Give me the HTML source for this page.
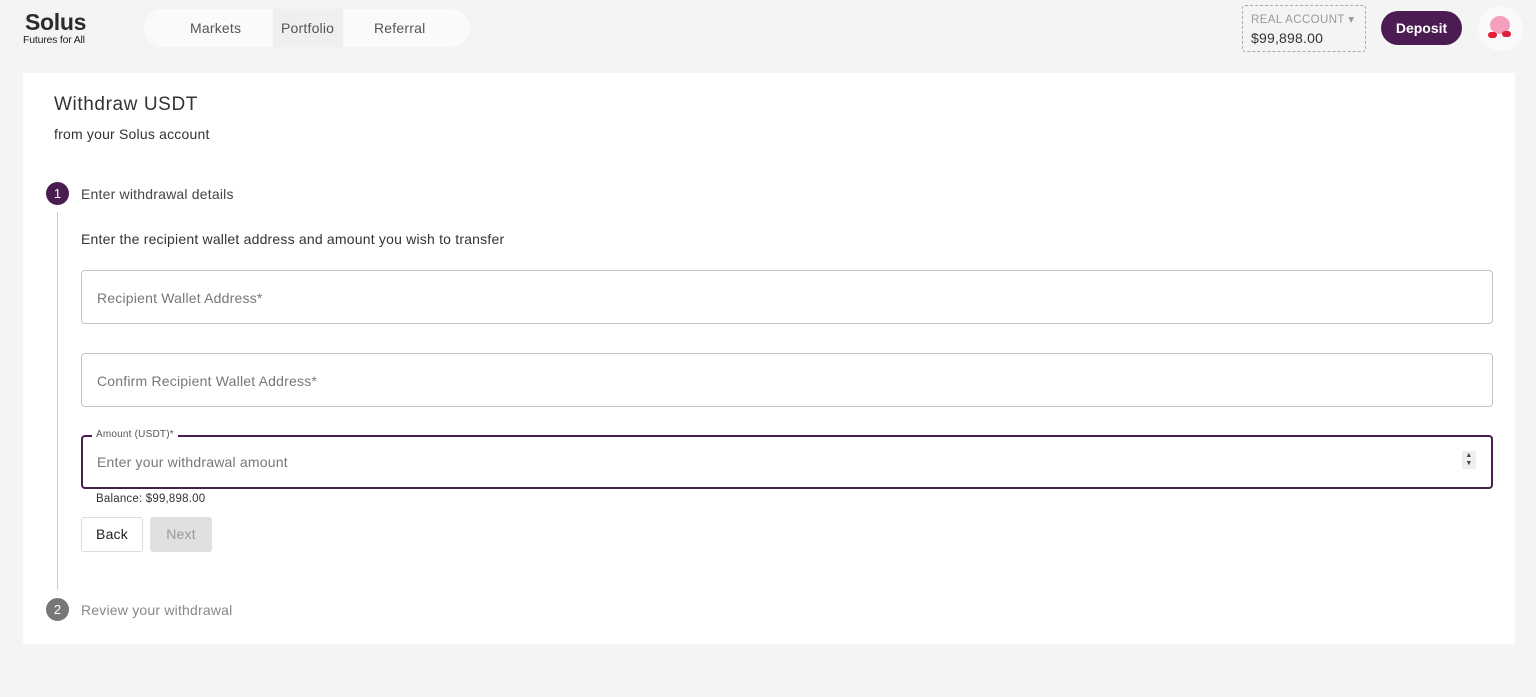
<!DOCTYPE html>
<html><head><style>
*{box-sizing:border-box;margin:0;padding:0}
body{width:1536px;height:697px;background:#f4f4f4;font-family:"Liberation Sans",sans-serif;color:#333;position:relative;overflow:hidden;letter-spacing:0.2px}
.abs{position:absolute}
.logo{left:25px;top:9px;font-size:23px;font-weight:bold;color:#2b2b2b;letter-spacing:-0.3px}
.tag{left:23px;top:34px;font-size:10.5px;color:#222;letter-spacing:-0.2px}
.nav{left:144px;top:9px;width:326px;height:38px;background:#fafafa;border-radius:19px}
.nav span{position:absolute;top:11px;font-size:14px;color:#555}
.acct{left:1242px;top:5px;width:124px;height:47px;border:1px dashed #aaa;border-radius:3px}
.dep{left:1381px;top:11px;width:81px;height:34px;background:#4a1c52;border-radius:17px;color:#fff;font-weight:bold;font-size:14px;text-align:center;line-height:34px;letter-spacing:0}
.av{left:1478px;top:6px;width:45px;height:45px;border-radius:50%;background:#fafafa}
.card{left:23px;top:73px;width:1492px;height:571px;background:#fff}
.inp{left:81px;width:1412px;height:54px;border:1px solid #c4c4c4;border-radius:4px;font-size:14px;color:#777;padding:19px 0 0 15px}
.circ{width:23px;height:23px;border-radius:50%;color:#fff;font-size:13px;text-align:center;line-height:23px;letter-spacing:0}
</style></head><body>
<div class="abs logo">Solus</div>
<div class="abs tag">Futures for All</div>
<div class="abs nav">
<span style="left:46px">Markets</span>
<div class="abs" style="left:129px;top:0;width:70px;height:38px;background:#efefef"></div>
<span style="left:137px">Portfolio</span>
<span style="left:230px">Referral</span>
</div>
<div class="abs acct"><div class="abs" style="left:8px;top:6px;font-size:11.5px;color:#999;letter-spacing:0.4px">REAL ACCOUNT ▾</div><div class="abs" style="left:8px;top:24px;font-size:14px;color:#333">$99,898.00</div></div>
<div class="abs dep">Deposit</div>
<div class="abs av"><div class="abs" style="left:12px;top:10px;width:20px;height:18px;border-radius:50%;background:#f4a0bd"></div><div class="abs" style="left:10px;top:26px;width:9px;height:6px;background:#e0203a;border-radius:3px"></div><div class="abs" style="left:24px;top:25px;width:9px;height:6px;background:#e0203a;border-radius:3px"></div></div>
<div class="abs card"></div>
<div class="abs" style="left:54px;top:94px;font-size:19px;color:#333;letter-spacing:0.6px">Withdraw USDT</div>
<div class="abs" style="left:54px;top:126px;font-size:14px;color:#333">from your Solus account</div>
<div class="abs circ" style="left:46px;top:182px;background:#4a1c52">1</div>
<div class="abs" style="left:81px;top:186px;font-size:14px;color:#444">Enter withdrawal details</div>
<div class="abs" style="left:57px;top:212px;width:1px;height:378px;background:#ccc"></div>
<div class="abs" style="left:81px;top:231px;font-size:14px;color:#333">Enter the recipient wallet address and amount you wish to transfer</div>
<div class="abs inp" style="top:270px">Recipient Wallet Address*</div>
<div class="abs inp" style="top:353px">Confirm Recipient Wallet Address*</div>
<div class="abs inp" style="top:435px;border:2px solid #4a1c52;padding:17px 0 0 14px">Enter your withdrawal amount</div>
<div class="abs" style="left:92px;top:429px;background:#fff;padding:0 4px;font-size:10px;color:#555">Amount (USDT)*</div>
<div class="abs" style="left:1462px;top:451px;width:14px;height:18px;background:#eee;font-size:7px;line-height:8px;text-align:center;color:#444;padding-top:1px">▲<br>▼</div>
<div class="abs" style="left:96px;top:493px;font-size:11.5px;color:#333">Balance: $99,898.00</div>
<div class="abs" style="left:81px;top:517px;width:62px;height:35px;border:1px solid #ddd;border-radius:3px;text-align:center;line-height:33px;font-size:14px;color:#222">Back</div>
<div class="abs" style="left:150px;top:517px;width:62px;height:35px;background:#e0e0e0;border-radius:3px;text-align:center;line-height:35px;font-size:14px;color:#999">Next</div>
<div class="abs circ" style="left:46px;top:598px;background:#777">2</div>
<div class="abs" style="left:81px;top:602px;font-size:14px;color:#888">Review your withdrawal</div>
</body></html>
